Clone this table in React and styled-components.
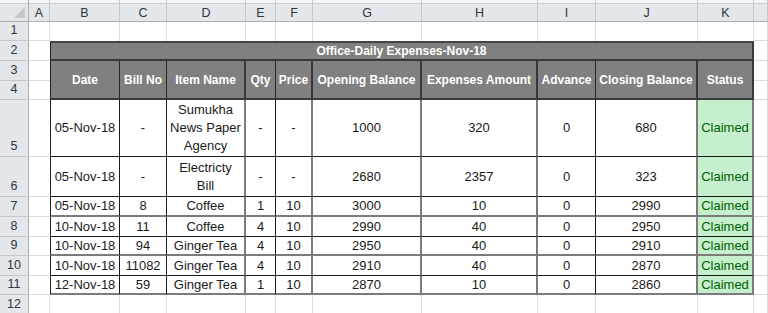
import React from 'react';
import styled, { createGlobalStyle, css } from 'styled-components';

const GlobalStyle = createGlobalStyle`
  html, body { margin: 0; padding: 0; background: #ffffff; }
  body { font-family: "Liberation Sans", Arial, sans-serif; }
`;

const GRID = '#dadcdd';
const HDR_BG = '#e3e6ea';
const HDR_LINE = '#c3c8cf';

const LINES = {
  thin: '1px solid #1b1b1b',
  thick: '2px solid #7b7b7b',
  dark: '2px solid #3a3a3a',
  hthin: '1px solid #262626',
  hthick: '2px solid #383838',
};

const Sheet = styled.div`
  display: grid;
  grid-template-columns: 29px 21px 70px 47px 79px 30px 37px 109px 116px 58px 102px 56px 1fr;
  grid-template-rows: 22px 19px 20px 20px 19px 57px 40px 20px 20px 19px 20px 19px 20px;
  width: 768px;
  height: 313px;
  overflow: hidden;
  background: #ffffff;
  font-family: "Liberation Sans", Arial, sans-serif;
  color: #1a1a1a;
`;

const Corner = styled.div`
  box-sizing: border-box;
  display: flex;
  align-items: flex-end;
  justify-content: flex-end;
  padding: 0 3px 3px 0;
  background: linear-gradient(#f4f5f7 0 3px, #cdd1d7 3px 4px, ${HDR_BG} 4px);
  border-right: 1px solid #a9b0b9;
  border-bottom: 1px solid #a9b0b9;
`;

const ColHead = styled.div`
  box-sizing: border-box;
  display: flex;
  align-items: center;
  justify-content: center;
  padding-top: 4px;
  background: linear-gradient(#f4f5f7 0 3px, #cdd1d7 3px 4px, ${HDR_BG} 4px);
  border-right: 1px solid ${HDR_LINE};
  border-bottom: 1px solid #a9b0b9;
  font-size: 12.5px;
  color: #2f3640;
`;

const RowHead = styled.div`
  box-sizing: border-box;
  display: flex;
  align-items: flex-end;
  justify-content: center;
  padding-bottom: 2px;
  background: ${HDR_BG};
  border-right: 1px solid #a9b0b9;
  border-bottom: 1px solid ${HDR_LINE};
  font-size: 12.5px;
  line-height: 15px;
  color: #2f3640;
`;

const Cell = styled.div`
  box-sizing: border-box;
  border-right: ${(p) => (p.$noRight ? 'none' : `1px solid ${GRID}`)};
  border-bottom: ${(p) => (p.$noBottom ? 'none' : `1px solid ${GRID}`)};
`;

const TCell = styled.div`
  box-sizing: border-box;
  display: flex;
  flex-direction: column;
  align-items: center;
  justify-content: center;
  text-align: center;
  padding: 0 2px;
  white-space: nowrap;
  font-size: 13px;
  line-height: 18px;
  grid-column: span ${(p) => p.$span || 1};
  grid-row: span ${(p) => p.$rows || 1};
  border-right: ${(p) => LINES[p.$right]};
  border-bottom: ${(p) => LINES[p.$bottom]};
  ${(p) => p.$left && css`border-left: 1px solid #222222;`}
  ${(p) => p.$top && css`border-top: 2px solid #444444;`}
  ${(p) =>
    p.$kind === 'head' &&
    css`
      background: #808080;
      color: #ffffff;
      font-weight: 700;
      font-size: 12px;
    `}
  ${(p) =>
    p.$kind === 'good' &&
    css`
      background: #c6efce;
      color: #006100;
    `}
`;

const Line = styled.span`
  display: block;
`;

const Triangle = () => (
  <svg width="11" height="11" viewBox="0 0 11 11">
    <polygon points="11,0 11,11 0,11" fill="#c3c8cf" />
  </svg>
);

const LETTERS = ['A', 'B', 'C', 'D', 'E', 'F', 'G', 'H', 'I', 'J', 'K', ''];
const V_AFTER = ['thin', 'thin', 'thick', 'thin', 'thick', 'thick', 'thick', 'thin', 'thick', 'thick'];
const H_AFTER = { 5: 'thin', 6: 'thin', 7: 'thick', 8: 'thin', 9: 'thick', 10: 'thin', 11: 'thick' };
const HEADERS = ['Date', 'Bill No', 'Item Name', 'Qty', 'Price', 'Opening Balance', 'Expenses Amount', 'Advance', 'Closing Balance', 'Status'];

const ROWS = [
  { n: 5, v: ['05-Nov-18', '-', ['Sumukha', 'News Paper', 'Agency'], '-', '-', '1000', '320', '0', '680', 'Claimed'] },
  { n: 6, v: ['05-Nov-18', '-', ['Electricty', 'Bill'], '-', '-', '2680', '2357', '0', '323', 'Claimed'] },
  { n: 7, v: ['05-Nov-18', '8', 'Coffee', '1', '10', '3000', '10', '0', '2990', 'Claimed'] },
  { n: 8, v: ['10-Nov-18', '11', 'Coffee', '4', '10', '2990', '40', '0', '2950', 'Claimed'] },
  { n: 9, v: ['10-Nov-18', '94', 'Ginger Tea', '4', '10', '2950', '40', '0', '2910', 'Claimed'] },
  { n: 10, v: ['10-Nov-18', '11082', 'Ginger Tea', '4', '10', '2910', '40', '0', '2870', 'Claimed'] },
  { n: 11, v: ['12-Nov-18', '59', 'Ginger Tea', '1', '10', '2870', '10', '0', '2860', 'Claimed'] },
];

const hdrLine = (s) => (s === 'thin' ? 'hthin' : 'hthick');

export default function App() {
  return (
    <>
      <GlobalStyle />
      <Sheet>
        <Corner>
          <Triangle />
        </Corner>
        {LETTERS.map((l, i) => (
          <ColHead key={`c${i}`}>{l}</ColHead>
        ))}

        <RowHead>1</RowHead>
        <Cell />
        {V_AFTER.map((_, i) => (
          <Cell key={`r1${i}`} $noBottom />
        ))}
        <Cell />

        <RowHead>2</RowHead>
        <Cell $noRight />
        <TCell $span={10} $kind="head" $left $top $right="hthick" $bottom="dark">
          Office-Daily Expenses-Nov-18
        </TCell>
        <Cell />

        <RowHead>3</RowHead>
        <Cell $noRight />
        {HEADERS.map((h, i) => (
          <TCell key={h} $rows={2} $kind="head" $left={i === 0} $right={hdrLine(V_AFTER[i])} $bottom="dark">
            {h}
          </TCell>
        ))}
        <Cell />

        <RowHead>4</RowHead>
        <Cell $noRight />
        <Cell />

        {ROWS.map((r) => (
          <React.Fragment key={r.n}>
            <RowHead>{r.n}</RowHead>
            <Cell $noRight />
            {r.v.map((val, i) => (
              <TCell
                key={i}
                $left={i === 0}
                $right={V_AFTER[i]}
                $bottom={H_AFTER[r.n]}
                $kind={i === 9 ? 'good' : undefined}
              >
                {Array.isArray(val) ? val.map((t) => <Line key={t}>{t}</Line>) : val}
              </TCell>
            ))}
            <Cell />
          </React.Fragment>
        ))}

        <RowHead>12</RowHead>
        <Cell />
        {V_AFTER.map((_, i) => (
          <Cell key={`r12${i}`} />
        ))}
        <Cell />
      </Sheet>
    </>
  );
}
